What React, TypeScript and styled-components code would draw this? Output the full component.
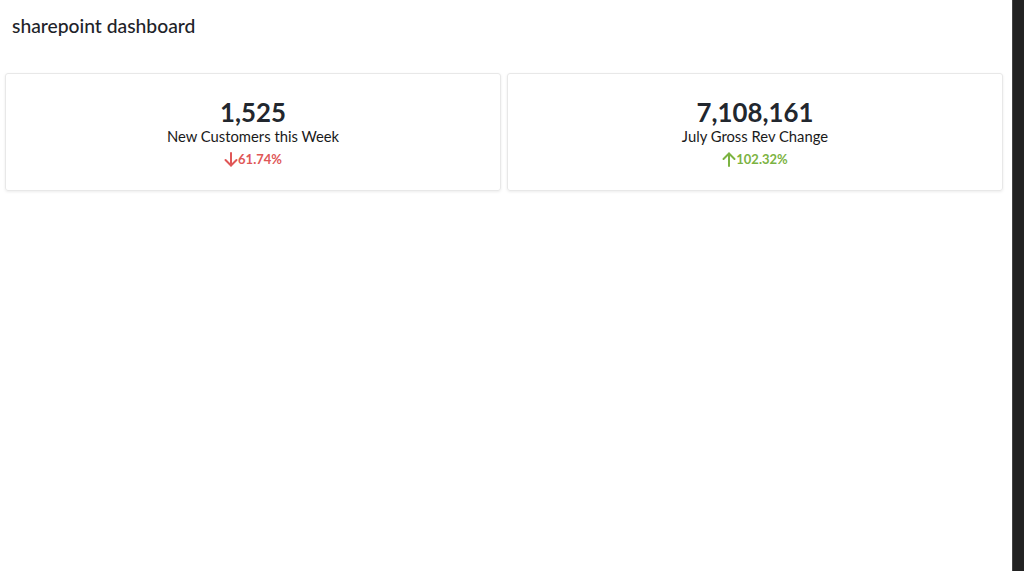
import styled, { createGlobalStyle } from "styled-components";

const GlobalStyle = createGlobalStyle`
  html, body {
    margin: 0;
    padding: 0;
    background: #ffffff;
    font-family: Lato, "Liberation Sans", sans-serif;
    color: #22272e;
  }
`;

type Stat = {
  value: string;
  label: string;
  change: string;
  up: boolean;
};

const stats: Stat[] = [
  { value: "1,525", label: "New Customers this Week", change: "61.74%", up: false },
  { value: "7,108,161", label: "July Gross Rev Change", change: "102.32%", up: true },
];

const ArrowIcon = ({ up }: { up: boolean }) => (
  <svg width="14" height="15" viewBox="0 0 14 15" fill="none" stroke="currentColor" strokeWidth="2" strokeLinecap="round" strokeLinejoin="round">
    {up ? (
      <>
        <path d="M7 14V1.5" />
        <path d="M1.5 7L7 1.5L12.5 7" />
      </>
    ) : (
      <>
        <path d="M7 1V13.5" />
        <path d="M1.5 8L7 13.5L12.5 8" />
      </>
    )}
  </svg>
);

const App = () => {
  return (
    <Page>
      <GlobalStyle />
      <Main>
        <Title>sharepoint dashboard</Title>
        <Cards>
          {stats.map((s, i) => (
            <Card key={i}>
              <Value>{s.value}</Value>
              <Label>{s.label}</Label>
              <Change $up={s.up}>
                <ArrowIcon up={s.up} />
                {s.change}
              </Change>
            </Card>
          ))}
        </Cards>
      </Main>
      <SideBar />
    </Page>
  );
};

export default App;

const Page = styled.div`
  display: flex;
  height: 571px;
  overflow: hidden;
`;
const Main = styled.div`
  flex: 1;
  display: flex;
  flex-direction: column;
`;
const SideBar = styled.div`
  width: 12px;
  background: #222222;
  border-left: 1px solid #444;
  box-sizing: border-box;
`;
const Title = styled.h1`
  margin: 0;
  padding: 14px 12px 0;
  height: 73px;
  box-sizing: border-box;
  font-size: 19.3px;
  font-weight: 500;
  color: #1e2329;
`;
const Cards = styled.div`
  display: grid;
  grid-template-columns: 1fr 1fr;
  gap: 6px;
  padding: 0 9px 0 5px;
`;
const Card = styled.div`
  height: 118px;
  box-sizing: border-box;
  border: 1px solid #e8e8e8;
  border-radius: 3px;
  box-shadow: 0 1px 3px rgba(0, 0, 0, 0.08);
  display: flex;
  flex-direction: column;
  align-items: center;
  padding-top: 23px;
`;
const Value = styled.div`
  font-size: 25.8px;
  font-weight: 700;
  line-height: 30px;
  color: #22272e;
`;
const Label = styled.div`
  font-size: 14.8px;
  line-height: 18px;
  color: #1a1a1a;
`;
const Change = styled.div<{ $up: boolean }>`
  margin-top: 6px;
  display: flex;
  align-items: center;
  font-size: 13px;
  font-weight: 700;
  line-height: 16px;
  color: ${(p) => (p.$up ? "#7cb342" : "#e05757")};
`;
